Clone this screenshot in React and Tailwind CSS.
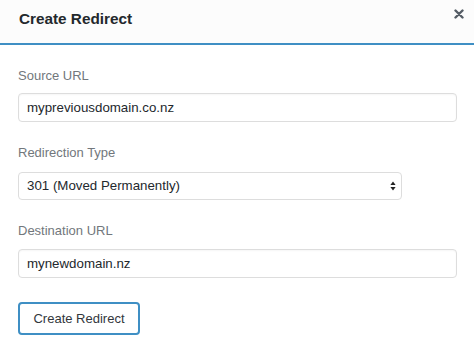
import React from "react";

function Field({ children }) {
  return (
    <div className="h-[29px] w-[439px] rounded-[4px] border border-[#dddddd] bg-white flex items-center pl-[8px] text-[13.3px] text-[#23282d] shadow-[inset_0_1px_2px_rgba(0,0,0,0.04)]">
      {children}
    </div>
  );
}

export default function App() {
  return (
    <div
      className="w-[474px] h-[359px] bg-white overflow-hidden"
      style={{ fontFamily: '"Liberation Sans", Arial, sans-serif' }}
    >
      <div className="h-[45px] border-b-2 border-[#3f8fc4] bg-[#fcfcfc] flex items-start justify-between pl-[19px] pr-[10px]">
        <div className="mt-[10px] text-[15.3px] font-bold text-[#23282d] leading-[18px]">
          Create Redirect
        </div>
        <svg className="mt-[9px] block" width="10" height="10" viewBox="0 0 10 10">
          <path d="M1.5 1.5 L8.5 8.5 M8.5 1.5 L1.5 8.5" stroke="#555d66" strokeWidth="2.4" strokeLinecap="round" />
        </svg>
      </div>
      <div className="pl-[18px] pt-[22px]">
        <div className="text-[13px] leading-[18px] text-[#72777c]">Source URL</div>
        <div className="mt-[8px]">
          <Field>mypreviousdomain.co.nz</Field>
        </div>
        <div className="mt-[22px] text-[13px] leading-[18px] text-[#72777c]">Redirection Type</div>
        <div className="mt-[10px] h-[28px] w-[384px] rounded-[4px] border border-[#dddddd] bg-white flex items-center justify-between pl-[8px] pr-[5px] text-[13.3px] text-[#23282d]">
          <span>301 (Moved Permanently)</span>
          <svg width="6" height="10" viewBox="0 0 6 10">
            <path d="M3 0.5 L5.6 4 L0.4 4 Z" fill="#222" />
            <path d="M3 9.5 L5.6 6 L0.4 6 Z" fill="#222" />
          </svg>
        </div>
        <div className="mt-[22px] text-[13px] leading-[18px] text-[#72777c]">Destination URL</div>
        <div className="mt-[9px]">
          <Field>mynewdomain.nz</Field>
        </div>
        <button className="mt-[24px] h-[33px] w-[122px] rounded-[4px] border-2 border-[#3f8fc4] bg-white text-[13px] text-[#32373c] flex items-center justify-center">
          Create Redirect
        </button>
      </div>
    </div>
  );
}
